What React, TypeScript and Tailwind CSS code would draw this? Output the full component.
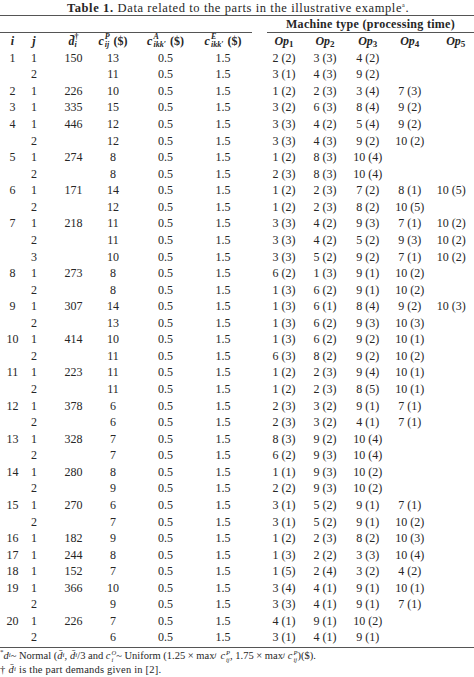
import React from "react";

type Row = [string, string, string, string, string[]];

const rows: Row[] = [
  ["1", "1", "150", "13", ["2 (2)", "3 (3)", "4 (2)"]],
  ["", "2", "", "11", ["3 (1)", "4 (3)", "9 (2)"]],
  ["2", "1", "226", "10", ["1 (2)", "2 (3)", "3 (4)", "7 (3)"]],
  ["3", "1", "335", "15", ["3 (2)", "6 (3)", "8 (4)", "9 (2)"]],
  ["4", "1", "446", "12", ["3 (3)", "4 (2)", "5 (4)", "9 (2)"]],
  ["", "2", "", "12", ["3 (3)", "4 (3)", "9 (2)", "10 (2)"]],
  ["5", "1", "274", "8", ["1 (2)", "8 (3)", "10 (4)"]],
  ["", "2", "", "8", ["2 (3)", "8 (3)", "10 (4)"]],
  ["6", "1", "171", "14", ["1 (2)", "2 (3)", "7 (2)", "8 (1)", "10 (5)"]],
  ["", "2", "", "12", ["1 (2)", "2 (3)", "8 (2)", "10 (5)"]],
  ["7", "1", "218", "11", ["3 (3)", "4 (2)", "9 (3)", "7 (1)", "10 (2)"]],
  ["", "2", "", "11", ["3 (3)", "4 (2)", "5 (2)", "9 (3)", "10 (2)"]],
  ["", "3", "", "10", ["3 (3)", "5 (2)", "9 (2)", "7 (1)", "10 (2)"]],
  ["8", "1", "273", "8", ["6 (2)", "1 (3)", "9 (1)", "10 (2)"]],
  ["", "2", "", "8", ["1 (3)", "6 (2)", "9 (1)", "10 (2)"]],
  ["9", "1", "307", "14", ["1 (3)", "6 (1)", "8 (4)", "9 (2)", "10 (3)"]],
  ["", "2", "", "13", ["1 (3)", "6 (2)", "9 (3)", "10 (3)"]],
  ["10", "1", "414", "10", ["1 (3)", "6 (2)", "9 (2)", "10 (1)"]],
  ["", "2", "", "11", ["6 (3)", "8 (2)", "9 (2)", "10 (2)"]],
  ["11", "1", "223", "11", ["1 (2)", "2 (3)", "9 (4)", "10 (1)"]],
  ["", "2", "", "11", ["1 (2)", "2 (3)", "8 (5)", "10 (1)"]],
  ["12", "1", "378", "6", ["2 (3)", "3 (2)", "9 (1)", "7 (1)"]],
  ["", "2", "", "6", ["2 (3)", "3 (2)", "4 (1)", "7 (1)"]],
  ["13", "1", "328", "7", ["8 (3)", "9 (2)", "10 (4)"]],
  ["", "2", "", "7", ["6 (2)", "9 (3)", "10 (4)"]],
  ["14", "1", "280", "8", ["1 (1)", "9 (3)", "10 (2)"]],
  ["", "2", "", "9", ["2 (2)", "9 (3)", "10 (2)"]],
  ["15", "1", "270", "6", ["3 (1)", "5 (2)", "9 (1)", "7 (1)"]],
  ["", "2", "", "7", ["3 (1)", "5 (2)", "9 (1)", "10 (2)"]],
  ["16", "1", "182", "9", ["1 (2)", "2 (3)", "8 (2)", "10 (3)"]],
  ["17", "1", "244", "8", ["1 (3)", "2 (2)", "3 (3)", "10 (4)"]],
  ["18", "1", "152", "7", ["1 (5)", "2 (4)", "3 (2)", "4 (2)"]],
  ["19", "1", "366", "10", ["3 (4)", "4 (1)", "9 (1)", "10 (1)"]],
  ["", "2", "", "9", ["3 (3)", "4 (1)", "9 (1)", "7 (1)"]],
  ["20", "1", "226", "7", ["4 (1)", "9 (1)", "10 (2)"]],
  ["", "2", "", "6", ["3 (1)", "4 (1)", "9 (1)"]],
];

// track widths follow the column midpoints; padding nudges each centre into place
const cols = [
  "w-[23px] pl-[2px]",
  "w-[31px] pr-[9px]",
  "w-[39px]",
  "w-[46px] pr-[6px]",
  "w-[55px] pr-[2px]",
  "w-[59.5px] pr-[1.5px]",
  "w-[51px] pl-[10px]",
  "w-[42px] pr-[1px]",
  "w-[42.5px]",
  "w-[41.5px]",
  "w-[43.5px] pr-[2px]",
];

function Cell({ col, children }: { col: number; children?: React.ReactNode }) {
  return (
    <div className={`flex shrink-0 justify-center whitespace-nowrap ${cols[col]}`}>
      {children}
    </div>
  );
}

function Stack({ base, sup, sub, bold = true, small = false }: { base: React.ReactNode; sup: string; sub: string; bold?: boolean; small?: boolean }) {
  return (
    <span className={`inline-flex items-center italic ${bold ? "font-bold" : ""}`}>
      <span>{base}</span>
      <span className={`ml-[1px] flex flex-col ${small ? "text-[6.5px] leading-[7px]" : "text-[8px] leading-[8.5px]"}`}>
        <span>{sup}</span>
        <span>{sub}</span>
      </span>
    </span>
  );
}

function Op({ n }: { n: number }) {
  return (
    <span className="font-bold italic">
      Op<span className="text-[9px] not-italic align-[-2px]">{n}</span>
    </span>
  );
}

export default function App() {
  return (
    <div className="w-[474px] bg-white text-[12px] text-[#262626] [font-family:Liberation_Serif,serif]">
      <div className="flex h-[15px] items-center justify-center pl-[2px] text-[12.5px] leading-[14px] tracking-[0.6px]">
        <span className="font-bold">Table 1.</span>
        <span className="ml-[4px]">Data related to the parts in the illustrative example</span>
        <sup className="text-[6px]">a</sup>
        <span>.</span>
      </div>
      <div className="border-t border-[#555]" />

      <div className="flex h-[16px] items-center">
        <div className="w-[267px] shrink-0" />
        <div className="flex flex-1 justify-center font-bold tracking-[0.3px]">
          Machine type (processing time)
        </div>
      </div>
      <div className="flex">
        <div className="w-[252px] border-t border-[#555]" />
        <div className="ml-[15px] flex-1 border-t border-[#555]" />
      </div>

      <div className="flex h-[16.5px] items-center">
        <Cell col={0}><span className="font-bold italic">i</span></Cell>
        <Cell col={1}><span className="font-bold italic">j</span></Cell>
        <Cell col={2}>
          <span className="inline-flex items-center font-bold italic">
            <span>d&#772;</span>
            <span className="flex flex-col text-[8px] leading-[8.5px]">
              <span className="not-italic">†</span>
              <span>i</span>
            </span>
          </span>
        </Cell>
        <Cell col={3}>
          <Stack base="c" sup="P" sub="ij" />
          <span className="ml-[4px] font-bold">($)</span>
        </Cell>
        <Cell col={4}>
          <Stack base="c" sup="A" sub="ikk′" />
          <span className="ml-[4px] font-bold">($)</span>
        </Cell>
        <Cell col={5}>
          <Stack base="c" sup="E" sub="ikk′" />
          <span className="ml-[4px] font-bold">($)</span>
        </Cell>
        <Cell col={6}><Op n={1} /></Cell>
        <Cell col={7}><Op n={2} /></Cell>
        <Cell col={8}><Op n={3} /></Cell>
        <Cell col={9}><Op n={4} /></Cell>
        <Cell col={10}><span className="pl-[9px]"><Op n={5} /></span></Cell>
      </div>

      <div className="flex flex-col">
        {rows.map(([i, j, d, cp, ops], k) => (
          <div key={k} className="flex h-[16.57px] items-center">
            <Cell col={0}>{i}</Cell>
            <Cell col={1}>{j}</Cell>
            <Cell col={2}>{d}</Cell>
            <Cell col={3}>{cp}</Cell>
            <Cell col={4}>0.5</Cell>
            <Cell col={5}>1.5</Cell>
            {[0, 1, 2, 3, 4].map((n) => (
              <Cell key={n} col={6 + n}>{ops[n] ?? ""}</Cell>
            ))}
          </div>
        ))}
      </div>

      <div className="mt-[1px] border-t border-[#555]" />
      <div className="flex flex-col pt-[1px] text-[10.5px] leading-[13px]">
        <p className="flex items-center whitespace-nowrap">
          <sup className="text-[7px]">*</sup>
          <span className="italic">d</span>
          <span className="text-[7px] italic align-[-2px]">i</span>
          <span>~ Normal (</span>
          <span className="italic">d&#772;</span>
          <span className="text-[7px] italic">i</span>
          <span>, </span>
          <span className="ml-[3px] italic">d&#772;</span>
          <span className="text-[7px] italic">i</span>
          <span>/3 and&nbsp;</span>
          <Stack base="c" sup="O" sub="i" bold={false} small />
          <span>~ Uniform (1.25 × max</span>
          <span className="text-[7px] italic">j</span>
          <span className="ml-[4px]" />
          <Stack base="c" sup="P" sub="ij" bold={false} small />
          <span>, 1.75 × max</span>
          <span className="text-[7px] italic">j</span>
          <span className="ml-[3px]" />
          <Stack base="c" sup="P" sub="ij" bold={false} small />
          <span>)($).</span>
        </p>
        <p className="flex items-center whitespace-nowrap tracking-[0.2px]">
          <span>†</span>
          <span className="ml-[3px] italic">d&#772;</span>
          <span className="text-[7px] italic">i</span>
          <span className="ml-[3px]">is the part demands given in [2].</span>
        </p>
      </div>
    </div>
  );
}
